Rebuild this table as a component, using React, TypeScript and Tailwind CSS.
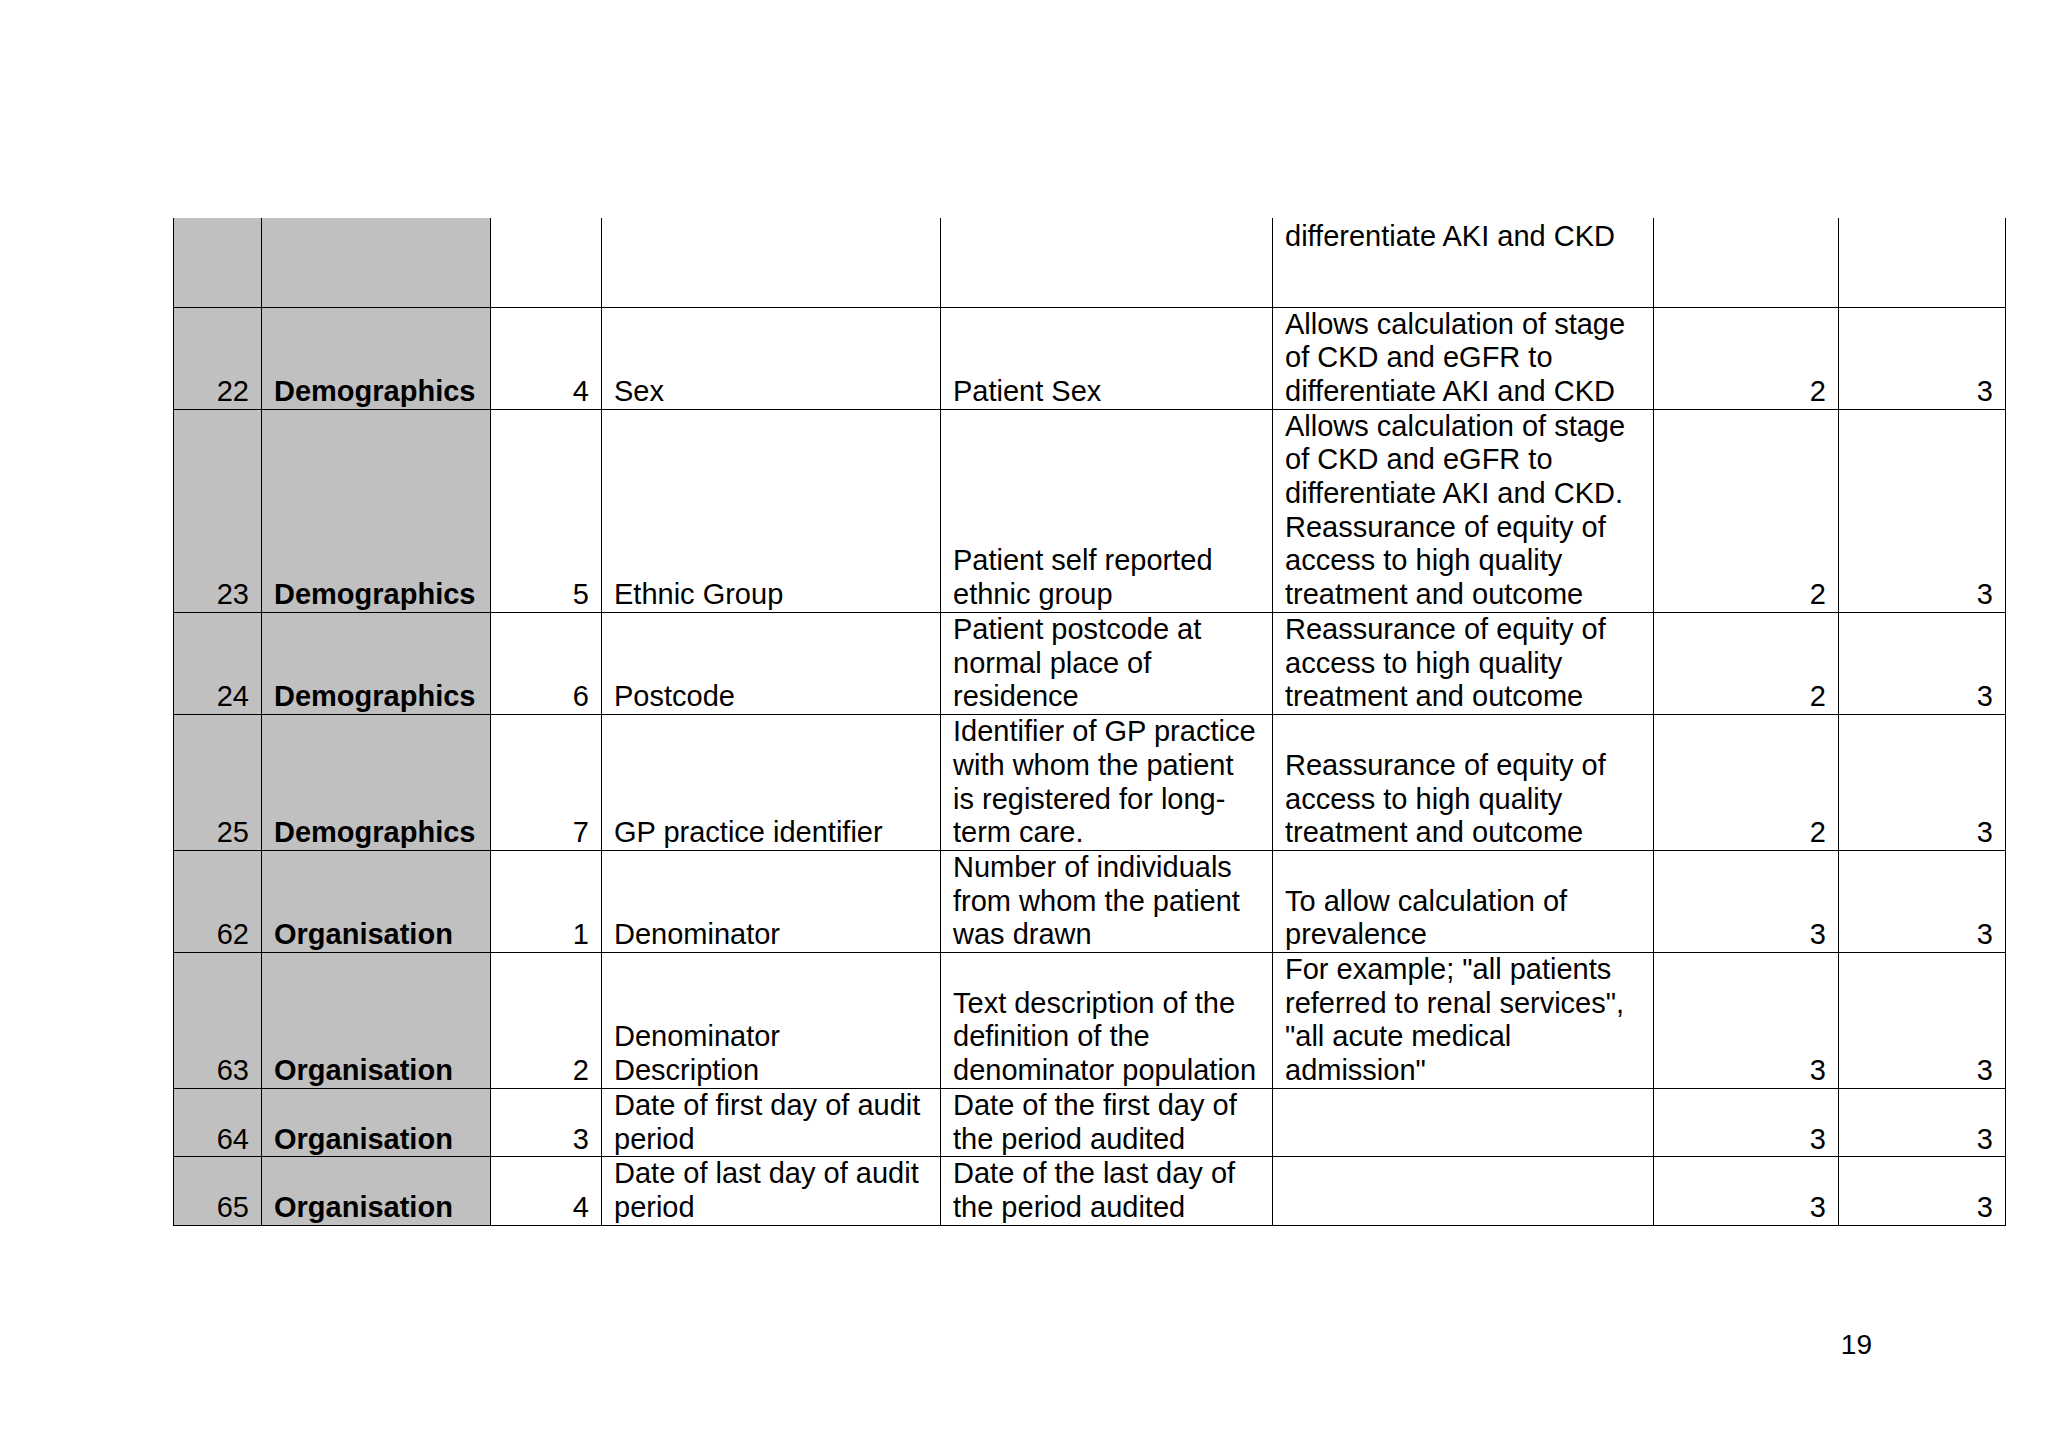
import React from "react";

type Row = {
  n: string;
  cat: string;
  k: string;
  name: string[];
  desc: string[];
  why: string[];
  a: string;
  b: string;
  h: string;
};

const rows: Row[] = [
  {
    n: "22",
    cat: "Demographics",
    k: "4",
    name: ["Sex"],
    desc: ["Patient Sex"],
    why: ["Allows calculation of stage", "of CKD and eGFR to", "differentiate AKI and CKD"],
    a: "2",
    b: "3",
    h: "h-[102px]",
  },
  {
    n: "23",
    cat: "Demographics",
    k: "5",
    name: ["Ethnic Group"],
    desc: ["Patient self reported", "ethnic group"],
    why: [
      "Allows calculation of stage",
      "of CKD and eGFR to",
      "differentiate AKI and CKD.",
      "Reassurance of equity of",
      "access to high quality",
      "treatment and outcome",
    ],
    a: "2",
    b: "3",
    h: "h-[202px]",
  },
  {
    n: "24",
    cat: "Demographics",
    k: "6",
    name: ["Postcode"],
    desc: ["Patient postcode at", "normal place of", "residence"],
    why: ["Reassurance of equity of", "access to high quality", "treatment and outcome"],
    a: "2",
    b: "3",
    h: "h-[102px]",
  },
  {
    n: "25",
    cat: "Demographics",
    k: "7",
    name: ["GP practice identifier"],
    desc: ["Identifier of GP practice", "with whom the patient", "is registered for long-", "term care."],
    why: ["Reassurance of equity of", "access to high quality", "treatment and outcome"],
    a: "2",
    b: "3",
    h: "h-[136px]",
  },
  {
    n: "62",
    cat: "Organisation",
    k: "1",
    name: ["Denominator"],
    desc: ["Number of individuals", "from whom the patient", "was drawn"],
    why: ["To allow calculation of", "prevalence"],
    a: "3",
    b: "3",
    h: "h-[102px]",
  },
  {
    n: "63",
    cat: "Organisation",
    k: "2",
    name: ["Denominator", "Description"],
    desc: ["Text description of the", "definition of the", "denominator population"],
    why: ["For example; \"all patients", "referred to renal services\",", "\"all acute medical", "admission\""],
    a: "3",
    b: "3",
    h: "h-[135px]",
  },
  {
    n: "64",
    cat: "Organisation",
    k: "3",
    name: ["Date of first day of audit", "period"],
    desc: ["Date of the first day of", "the period audited"],
    why: [],
    a: "3",
    b: "3",
    h: "h-[68px]",
  },
  {
    n: "65",
    cat: "Organisation",
    k: "4",
    name: ["Date of last day of audit", "period"],
    desc: ["Date of the last day of", "the period audited"],
    why: [],
    a: "3",
    b: "3",
    h: "h-[67px]",
  },
];

function Lines({ lines }: { lines: string[] }) {
  return (
    <>
      {lines.map((l, i) => (
        <div key={i} className="whitespace-nowrap">
          {l}
        </div>
      ))}
    </>
  );
}

const cell = "border border-black px-[12px] py-0 align-bottom";
const gray = "bg-[#c0c0c0]";

export default function App() {
  return (
    <div className="min-h-[1448px] w-[2048px] bg-white font-['Liberation_Sans',Arial,sans-serif] text-[29px] leading-[33.7px] text-black">
      <div className="pt-[218px] pl-[173px]">
        <table className="table-fixed border-collapse w-[1832px]">
          <colgroup>
            <col className="w-[88px]" />
            <col className="w-[229px]" />
            <col className="w-[111px]" />
            <col className="w-[339px]" />
            <col className="w-[332px]" />
            <col className="w-[381px]" />
            <col className="w-[185px]" />
            <col className="w-[167px]" />
          </colgroup>
          <tbody>
            <tr className="h-[89px]">
              <td className={`${cell} ${gray} border-t-0 align-top`}></td>
              <td className={`${cell} ${gray} border-t-0 align-top`}></td>
              <td className={`${cell} border-t-0 align-top`}></td>
              <td className={`${cell} border-t-0 align-top`}></td>
              <td className={`${cell} border-t-0 align-top`}></td>
              <td className={`${cell} border-t-0 align-top pt-[2px]`}>
                <Lines lines={["differentiate AKI and CKD"]} />
              </td>
              <td className={`${cell} border-t-0 align-top`}></td>
              <td className={`${cell} border-t-0 align-top`}></td>
            </tr>
            {rows.map((r) => (
              <tr key={r.n} className={r.h}>
                <td className={`${cell} ${gray} text-right`}>{r.n}</td>
                <td className={`${cell} ${gray} font-bold`}>{r.cat}</td>
                <td className={`${cell} text-right`}>{r.k}</td>
                <td className={cell}>
                  <Lines lines={r.name} />
                </td>
                <td className={cell}>
                  <Lines lines={r.desc} />
                </td>
                <td className={cell}>
                  <Lines lines={r.why} />
                </td>
                <td className={`${cell} text-right`}>{r.a}</td>
                <td className={`${cell} text-right`}>{r.b}</td>
              </tr>
            ))}
          </tbody>
        </table>
      </div>
      <div className="mt-[103px] flex justify-end pr-[176px] text-[28px] leading-[32px]">19</div>
    </div>
  );
}
